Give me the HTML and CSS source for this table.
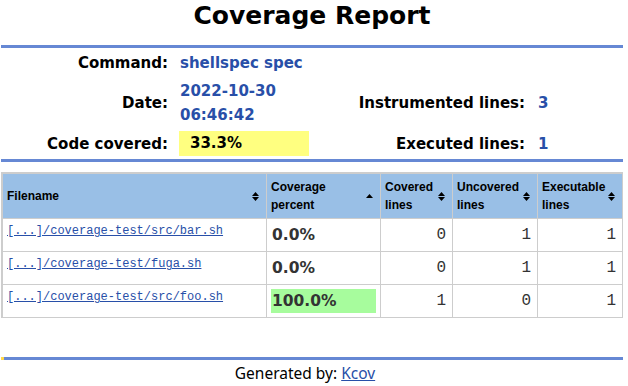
FILE: index.html
```html
<!DOCTYPE html>
<html lang="en">
<head>
<meta charset="utf-8">
<title>Coverage Report</title>
<link rel="stylesheet" href="styles.css">
</head>
<body>
<div class="page">
  <h1 class="title">Coverage Report</h1>
  <div class="ruler"></div>
  <div class="summary">
    <div class="label">Command:</div>
    <div class="value">shellspec spec</div>
    <div class="label"></div>
    <div class="value"></div>

    <div class="label">Date:</div>
    <div class="value">2022-10-30 06:46:42</div>
    <div class="label">Instrumented lines:</div>
    <div class="value">3</div>

    <div class="label">Code covered:</div>
    <div class="value"><div class="per-med">33.3%</div></div>
    <div class="label">Executed lines:</div>
    <div class="value">1</div>
  </div>
  <div class="ruler"></div>

  <table class="files">
    <thead>
      <tr>
        <th class="c-file"><div class="th-in"><span>Filename</span><svg class="sort" width="7" height="9" viewBox="0 0 7 9"><path d="M0 4 L3.5 0 L7 4 Z M0 5 L3.5 9 L7 5 Z" fill="#000"/></svg></div></th>
        <th class="c-per"><div class="th-in"><span>Coverage<br>percent</span><svg class="sort" width="7" height="9" viewBox="0 0 7 9"><path d="M0 6 L3.5 2 L7 6 Z" fill="#000"/></svg></div></th>
        <th class="c-cov"><div class="th-in"><span>Covered<br>lines</span><svg class="sort" width="7" height="9" viewBox="0 0 7 9"><path d="M0 4 L3.5 0 L7 4 Z M0 5 L3.5 9 L7 5 Z" fill="#000"/></svg></div></th>
        <th class="c-unc"><div class="th-in"><span>Uncovered<br>lines</span><svg class="sort" width="7" height="9" viewBox="0 0 7 9"><path d="M0 4 L3.5 0 L7 4 Z M0 5 L3.5 9 L7 5 Z" fill="#000"/></svg></div></th>
        <th class="c-exe"><div class="th-in"><span>Executable<br>lines</span><svg class="sort" width="7" height="9" viewBox="0 0 7 9"><path d="M0 4 L3.5 0 L7 4 Z M0 5 L3.5 9 L7 5 Z" fill="#000"/></svg></div></th>
      </tr>
    </thead>
    <tbody>
      <tr>
        <td class="file"><a href="#">[...]/coverage-test/src/bar.sh</a></td>
        <td class="per"><div class="per-none">0.0%</div></td>
        <td class="num">0</td>
        <td class="num">1</td>
        <td class="num">1</td>
      </tr>
      <tr>
        <td class="file"><a href="#">[...]/coverage-test/fuga.sh</a></td>
        <td class="per"><div class="per-none">0.0%</div></td>
        <td class="num">0</td>
        <td class="num">1</td>
        <td class="num">1</td>
      </tr>
      <tr>
        <td class="file"><a href="#">[...]/coverage-test/src/foo.sh</a></td>
        <td class="per"><div class="per-hi">100.0%</div></td>
        <td class="num">1</td>
        <td class="num">0</td>
        <td class="num">1</td>
      </tr>
    </tbody>
  </table>

  <div class="ruler foot-ruler"><span class="glass"></span></div>
  <div class="version">Generated by: <a href="#">Kcov</a></div>
</div>
</body>
</html>
```

FILE: styles.css
```css
html, body {
  margin: 0;
  padding: 0;
  background: #ffffff;
  color: #000000;
}

body {
  padding: 0 5px 0 1px;
  font-family: "Noto Sans", sans-serif;
}

.page {
  width: 622px;
}

.title {
  margin: 0;
  height: 45px;
  box-sizing: border-box;
  padding-top: 1px;
  text-align: center;
  font-family: "DejaVu Sans", sans-serif;
  font-weight: bold;
  font-size: 25px;
  line-height: 29px;
}

.ruler {
  height: 3px;
  background: #6688d4;
}

.summary {
  display: grid;
  grid-template-columns: 174px 130px 220px 1fr;
  column-gap: 4px;
  row-gap: 4px;
  padding: 3px 0 3px 0;
  font-family: "DejaVu Sans", sans-serif;
  font-weight: bold;
  font-size: 15px;
  line-height: 24px;
  align-items: center;
}

.summary .label {
  text-align: right;
  color: #000;
}

.summary .label:nth-child(4n+1) {
  padding-right: 7px;
}

.summary .label:nth-child(4n+3) {
  padding-right: 8px;
}

.summary .value {
  color: #284fa8;
  padding-left: 1px;
}

.summary .value .per-med {
  margin-left: -1px;
  background: #ffff80;
  color: #000;
  height: 25px;
  line-height: 25px;
  padding-left: 11px;
}

.files {
  width: 622px;
  table-layout: fixed;
  border-spacing: 0;
  border-style: solid;
  border-color: #cdcdcd;
  border-width: 2px 0 0 2px;
  margin: 10px 0 39px 0;
  background: #fff;
}

.files th,
.files td {
  border-style: solid;
  border-color: #cdcdcd;
  border-width: 0 1px 1px 0;
  padding: 4px;
  box-sizing: border-box;
}

.files th {
  background: #99bfe6;
  font-family: "Liberation Sans", Arial, sans-serif;
  font-weight: bold;
  font-size: 12px;
  line-height: 18px;
  text-align: left;
  color: #000;
}

.c-file { width: 264px; }
.c-per { width: 114px; }
.c-cov { width: 72px; }
.c-unc { width: 85px; }
.c-exe { width: 85px; }

.th-in {
  display: flex;
  align-items: center;
  justify-content: space-between;
  min-height: 36px;
}

.sort {
  flex: none;
  margin-right: 3px;
}

.files td {
  vertical-align: top;
  height: 33px;
}

.file {
  font-family: "Liberation Mono", monospace;
  font-size: 12px;
  line-height: 16px;
}

.file a {
  color: #284fa8;
}

.per div {
  font-family: "DejaVu Sans", sans-serif;
  font-weight: bold;
  font-size: 15.5px;
  line-height: 24px;
  height: 24px;
  color: #333;
  padding-left: 1px;
}

.per .per-hi {
  background: #a7fc9d;
}

.num {
  text-align: right;
  font-family: "Liberation Mono", monospace;
  font-size: 16px;
  line-height: 24px;
  color: #333;
  padding-right: 6px !important;
}

.foot-ruler {
  display: flex;
}

.glass {
  width: 3px;
  height: 3px;
  background: #ffd84a;
}

.version {
  text-align: center;
  font-family: "Noto Sans", sans-serif;
  font-size: 15.5px;
  line-height: 24px;
  padding-top: 1px;
  padding-right: 14px;
}

.version a {
  color: #284fa8;
}
```
